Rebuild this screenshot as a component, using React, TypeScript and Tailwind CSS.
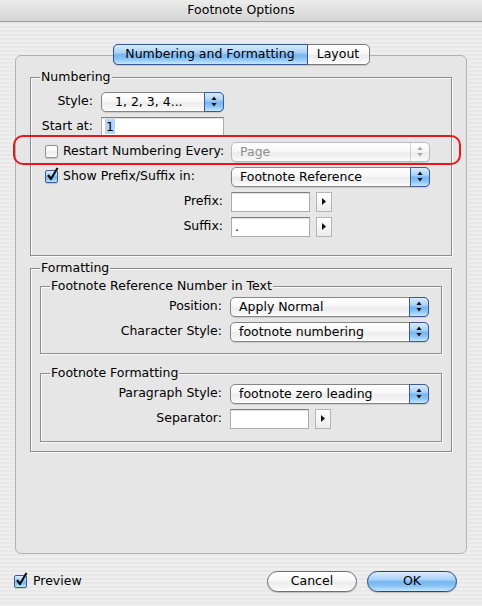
import clsx from "clsx";

const AQUA =
  "bg-[linear-gradient(180deg,#d9ecfd_0%,#a9d1f7_40%,#77b5f1_52%,#8cc5f6_75%,#c7e8ff_100%)]";
const GLASS =
  "bg-[linear-gradient(180deg,#ffffff_0%,#f7f7f7_45%,#ececec_55%,#f5f5f5_85%,#ffffff_100%)]";

function UpDown({ dim }: { dim?: boolean }) {
  const fill = dim ? "#a8a8a8" : "#111";
  return (
    <svg width="6" height="11" viewBox="0 0 6 11">
      <path d="M3 0.5 L5.6 4 H0.4Z" fill={fill} />
      <path d="M0.4 7 H5.6 L3 10.5Z" fill={fill} />
    </svg>
  );
}

function Popup({
  value,
  className,
  dim,
  pad = "pl-[8px]",
}: {
  value: string;
  className: string;
  dim?: boolean;
  pad?: string;
}) {
  return (
    <div
      className={clsx(
        "flex h-[20px] rounded-[5px] border shadow-[0_1px_1px_rgba(0,0,0,0.12)]",
        dim ? "border-[#bcbcbc]" : "border-[#858585]",
        GLASS,
        className
      )}
    >
      <div className={clsx("flex-1 truncate leading-[18px]", pad, dim ? "text-[#8e8e8e]" : "text-black")}>
        {value}
      </div>
      {dim ? (
        <div className="flex w-[19px] items-center justify-center border-l border-[#cfcfcf]">
          <UpDown dim />
        </div>
      ) : (
        <div
          className={clsx(
            "-my-px -mr-px flex h-[20px] w-[20px] items-center justify-center rounded-r-[5px] border border-[#3a5b95]",
            AQUA
          )}
        >
          <UpDown />
        </div>
      )}
    </div>
  );
}

function Field({ children, className }: { children?: React.ReactNode; className: string }) {
  return (
    <div
      className={clsx(
        "h-[20px] border border-[#acacac] border-t-[#808080] bg-white pl-[3px] leading-[18px] shadow-[inset_0_1px_0_#e0e0e0]",
        className
      )}
    >
      {children}
    </div>
  );
}

function MenuArrow() {
  return (
    <div className="ml-[6px] flex h-[20px] w-[16px] items-center justify-center border border-[#b4b4b4] bg-[linear-gradient(180deg,#ffffff,#ececec)]">
      <svg width="4" height="7" viewBox="0 0 4 7">
        <path d="M0 0 L4 3.5 L0 7Z" fill="#111" />
      </svg>
    </div>
  );
}

function Check({ on }: { on?: boolean }) {
  return (
    <div className="relative h-[13px] w-[13px] shrink-0">
      <div
        className={clsx(
          "h-[13px] w-[13px] rounded-[2px] border shadow-[0_1px_1px_rgba(0,0,0,0.15)]",
          on ? clsx("border-[#3a5b95]", AQUA) : clsx("border-[#8f8f8f]", GLASS)
        )}
      />
      {on && (
        <svg className="absolute -top-[3px] left-[1px]" width="13" height="14" viewBox="0 0 13 14">
          <path d="M2 8 L5 12 L11.5 1" fill="none" stroke="#111" strokeWidth="2.2" strokeLinejoin="round" />
        </svg>
      )}
    </div>
  );
}

function Group({
  title,
  className,
  children,
}: {
  title: string;
  className?: string;
  children: React.ReactNode;
}) {
  return (
    <div
      className={clsx(
        "relative border border-[#8c8c8c] shadow-[1px_1px_0_#fbfbfb,inset_1px_1px_0_#fbfbfb]",
        className
      )}
    >
      <span className="absolute -top-[9px] left-[9px] bg-[#e6e6e6] px-[1px] leading-[16px]">{title}</span>
      {children}
    </div>
  );
}

function Row({ label, w, children }: { label: React.ReactNode; w: string; children: React.ReactNode }) {
  return (
    <div className="flex h-[25px] items-center">
      <div className={clsx("shrink-0 pr-[8px] text-right", w)}>{label}</div>
      {children}
    </div>
  );
}

export default function App() {
  return (
    <div className="relative h-[606px] w-[482px] overflow-hidden bg-[repeating-linear-gradient(180deg,#eeeeee_0px,#eeeeee_2px,#e8e8e8_2px,#e8e8e8_4px)] font-['DejaVu_Sans',sans-serif] text-[12.5px] text-black">
      <div className="flex h-[22px] items-center justify-center border-b border-[#9c9c9c] bg-[linear-gradient(180deg,#ececec,#d5d5d5)]">
        Footnote Options
      </div>

      <div className="relative z-10 mx-auto mt-[22px] flex h-[21px] w-[257px] rounded-[5px] border border-[#7a7a7a] shadow-[0_1px_1px_rgba(0,0,0,0.15)]">
        <div
          className={clsx(
            "-my-px -ml-px flex h-[21px] w-[195px] items-center justify-center rounded-l-[5px] border border-[#34558f]",
            AQUA
          )}
        >
          Numbering and Formatting
        </div>
        <div className={clsx("flex flex-1 items-center justify-center rounded-r-[5px]", GLASS)}>Layout</div>
      </div>

      <div className="mx-[15px] -mt-[10px] h-[499px] rounded-[6px] border border-[#b2b2b2] bg-[#e6e6e6] px-[14px] pt-[21px]">
        <Group title="Numbering" className="pb-[16px] pt-[11px]">
          <Row label="Style:" w="w-[70px]">
            <Popup value="1, 2, 3, 4..." className="w-[123px]" pad="pl-[13px]" />
          </Row>
          <Row label="Start at:" w="w-[70px]">
            <Field className="h-[19px] w-[123px] leading-[17px]">
              <span className="bg-[#b5d5ff] px-[1px]">1</span>
            </Field>
          </Row>
          <div className="flex h-[25px] items-center">
            <div className="flex w-[200px] shrink-0 items-center gap-[5px] pl-[14px]">
              <Check />
              <span>Restart Numbering Every:</span>
            </div>
            <Popup value="Page" className="w-[199px]" dim />
          </div>
          <div className="flex h-[25px] items-center">
            <div className="flex w-[200px] shrink-0 items-center gap-[5px] pl-[14px]">
              <Check on />
              <span>Show Prefix/Suffix in:</span>
            </div>
            <Popup value="Footnote Reference" className="w-[199px]" />
          </div>
          <Row label="Prefix:" w="w-[200px]">
            <Field className="w-[79px]" />
            <MenuArrow />
          </Row>
          <Row label="Suffix:" w="w-[200px]">
            <Field className="w-[79px]">.</Field>
            <MenuArrow />
          </Row>
        </Group>

        <Group title="Formatting" className="mt-[12px] px-[9px] pb-[9px] pt-[17px]">
          <Group title="Footnote Reference Number in Text" className="pb-[9px] pt-[7px]">
            <Row label="Position:" w="w-[189px]">
              <Popup value="Apply Normal" className="w-[199px]" />
            </Row>
            <Row label="Character Style:" w="w-[189px]">
              <Popup value="footnote numbering" className="w-[199px]" />
            </Row>
          </Group>
          <Group title="Footnote Formatting" className="mt-[19px] pb-[10px] pt-[7px]">
            <Row label="Paragraph Style:" w="w-[189px]">
              <Popup value="footnote zero leading" className="w-[199px]" />
            </Row>
            <Row label="Separator:" w="w-[189px]">
              <Field className="w-[79px]" />
              <MenuArrow />
            </Row>
          </Group>
        </Group>
      </div>

      <div className="mt-[17px] flex h-[21px] items-center pl-[14px] pr-[25px]">
        <Check on />
        <span className="ml-[6px]">Preview</span>
        <div className="ml-auto flex gap-[10px]">
          <button
            className={clsx(
              "h-[21px] w-[90px] rounded-full border border-[#6c6c6c] shadow-[0_1px_1px_rgba(0,0,0,0.2)]",
              GLASS
            )}
          >
            Cancel
          </button>
          <button
            className={clsx(
              "h-[21px] w-[90px] rounded-full border border-[#26467f] shadow-[0_1px_1px_rgba(0,0,0,0.2)]",
              AQUA
            )}
          >
            OK
          </button>
        </div>
      </div>

      {/* highlight ring around the restart option */}
      <div className="pointer-events-none absolute left-[13px] top-[135px] h-[30px] w-[448px] rounded-[10px] border-2 border-[#e8161b]" />
    </div>
  );
}
